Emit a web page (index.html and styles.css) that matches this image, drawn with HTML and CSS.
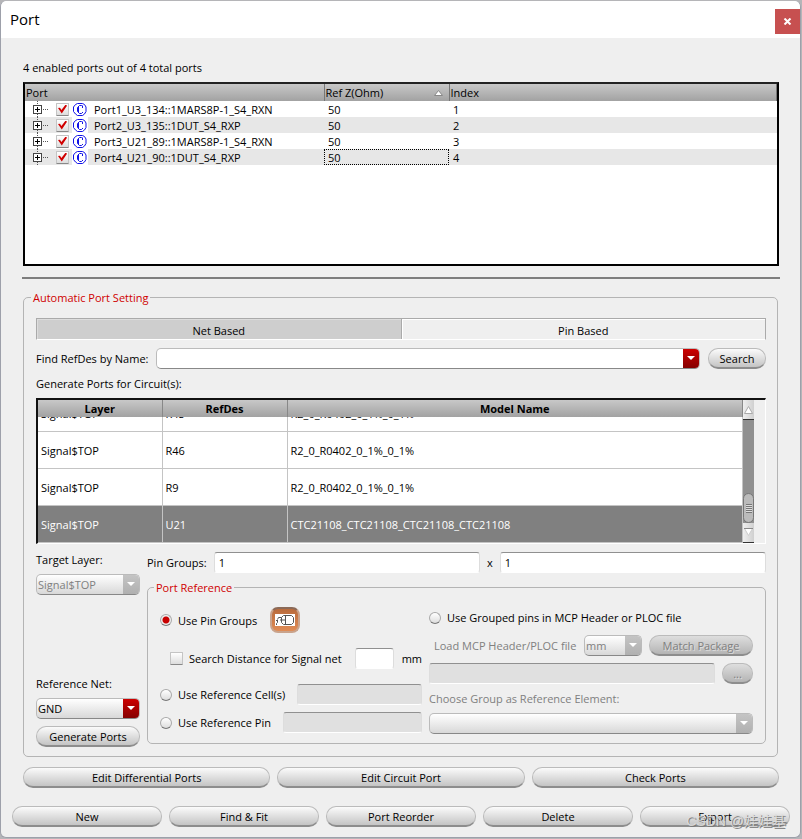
FILE: index.html
```html
<!DOCTYPE html>
<html lang="en">
<head>
<meta charset="utf-8">
<title>Port</title>
<link rel="stylesheet" href="styles.css">
</head>
<body>
<svg class="defs" aria-hidden="true">
  <symbol id="plus" viewBox="0 0 16 16">
    <path d="M5.500 0v3M5.500 13v3M11 8.500h5" fill="none" stroke="#555" stroke-dasharray="1 1"/>
    <rect x="1.500" y="4.500" width="8" height="8" fill="#fff" stroke="#444"/>
    <path d="M3 8.500h5M5.500 6v5" stroke="#000"/>
  </symbol>
  <symbol id="circuit" viewBox="0 0 16 16">
    <rect width="16" height="16" fill="#fff"/>
    <path d="M5.500 2.500h5l2 1 1.500 2.500v4.500l-1.500 2.500-2 1.500h-5l-2-1.500L1.500 10.500V6L3.500 3.500z" fill="none" stroke="#1212e8"/>
    <path d="M10.500 4.500v2.500M10.500 5.500l-1-1h-2l-2 2v4l2 2h2l1.500-1.500" fill="none" stroke="#1212e8"/>
    <path d="M6.500 5v7" fill="none" stroke="#1212e8"/>
  </symbol>
</svg>
<main class="window">
  <header class="titlebar">
    <h1>Port</h1>
    <button class="close" aria-label="Close"><svg width="9" height="7" viewBox="0 0 9 7"><path d="M1.500.500l6 6M7.500.500l-6 6" stroke="#fff" stroke-width="2"/></svg></button>
  </header>

  <div class="content">
    <p class="summary">4 enabled ports out of 4 total ports</p>
    <div class="portlist">
      <table class="ports">
        <colgroup><col class="c-port"><col class="c-ref"><col></colgroup>
        <thead><tr><th>Port</th><th><span class="sort">Ref Z(Ohm)<svg width="9" height="6" viewBox="0 0 9 6"><path d="M.500 5.500L4.500.500l4 5z" fill="#fff" stroke="#888"/></svg></span></th><th>Index</th></tr></thead>
        <tbody>
          <tr><td><label class="tree"><svg class="plus"><use href="#plus"/></svg><input type="checkbox" checked><svg class="circuit"><use href="#circuit"/></svg>Port1_U3_134::1MARS8P-1_S4_RXN</label></td><td>50</td><td>1</td></tr>
          <tr><td><label class="tree"><svg class="plus"><use href="#plus"/></svg><input type="checkbox" checked><svg class="circuit"><use href="#circuit"/></svg>Port2_U3_135::1DUT_S4_RXP</label></td><td>50</td><td>2</td></tr>
          <tr><td><label class="tree"><svg class="plus"><use href="#plus"/></svg><input type="checkbox" checked><svg class="circuit"><use href="#circuit"/></svg>Port3_U21_89::1MARS8P-1_S4_RXN</label></td><td>50</td><td>3</td></tr>
          <tr><td><label class="tree"><svg class="plus"><use href="#plus"/></svg><input type="checkbox" checked><svg class="circuit"><use href="#circuit"/></svg>Port4_U21_90::1DUT_S4_RXP</label></td><td class="focused">50</td><td>4</td></tr>
        </tbody>
      </table>
    </div>
    <hr>

    <fieldset class="auto">
      <legend>Automatic Port Setting</legend>
      <div class="tabs" role="tablist">
        <button role="tab" aria-selected="true">Net Based</button>
        <button role="tab" aria-selected="false">Pin Based</button>
      </div>
      <div class="find">
        <label for="refdes">Find RefDes by Name:</label>
        <span class="combo plain red"><select id="refdes"><option></option></select></span>
        <button class="btn search">Search</button>
      </div>
      <p class="caption">Generate Ports for Circuit(s):</p>
      <div class="circuits">
        <table>
          <colgroup><col class="c-layer"><col class="c-des"><col></colgroup>
          <thead><tr><th>Layer</th><th>RefDes</th><th>Model Name</th></tr></thead>
          <tbody>
            <tr class="cut"><td><div><span>Signal$TOP</span></div></td><td><div><span>R45</span></div></td><td><div><span>R2_0_R0402_0_1%_0_1%</span></div></td></tr>
            <tr><td>Signal$TOP</td><td>R46</td><td>R2_0_R0402_0_1%_0_1%</td></tr>
            <tr><td>Signal$TOP</td><td>R9</td><td>R2_0_R0402_0_1%_0_1%</td></tr>
            <tr class="selected"><td>Signal$TOP</td><td>U21</td><td>CTC21108_CTC21108_CTC21108_CTC21108</td></tr>
          </tbody>
        </table>
        <div class="scrollbar">
          <button aria-label="Scroll up"><svg width="9" height="9" viewBox="0 0 9 9"><path d="M.500 8.500l4-7 4 7z" fill="#fff" stroke="#aaa"/></svg></button>
          <div class="track"><div class="thumb"></div></div>
          <button aria-label="Scroll down"><svg width="9" height="9" viewBox="0 0 9 9"><path d="M.500.500h8l-4 7z" fill="#fff" stroke="#ccc"/><path d="M0 .500h9" stroke="#888"/></svg></button>
        </div>
      </div>

      <div class="lower">
        <div class="side">
          <label for="layer">Target Layer:</label>
          <span class="combo"><select id="layer" disabled><option>Signal$TOP</option></select></span>
          <label for="net" class="netlabel">Reference Net:</label>
          <span class="combo red"><select id="net"><option>GND</option></select></span>
          <button class="btn">Generate Ports</button>
        </div>
        <div class="detail">
          <div class="groups">
            <label for="rows">Pin Groups:</label>
            <input type="text" id="rows" value="1">
            <label for="cols">x</label>
            <input type="text" id="cols" value="1">
          </div>
          <fieldset class="reference">
            <legend>Port Reference</legend>
            <div class="choices">
              <div class="choice first">
                <input type="radio" name="ref" id="r1" checked><label for="r1">Use Pin Groups</label>
                <button class="pinicon" aria-label="Show pin groups"><svg width="20" height="12" viewBox="0 0 20 12"><rect width="20" height="12" fill="#fff"/><path d="M8.500 1.500h8l2 2v5l-2 2h-8l-2-2v-5zM10.500 1.500v9M5 6h5.500M6.500 3.500h-3l-1 2M1 6.500h2M2.500 6.500v2l-1 1v1.500" fill="none" stroke="#555"/></svg></button>
              </div>
              <div class="choice distance">
                <input type="checkbox" id="dist"><label for="dist">Search Distance for Signal net</label>
                <input type="text" class="short" aria-label="Distance"><span>mm</span>
              </div>
              <div class="choice">
                <input type="radio" name="ref" id="r2"><label for="r2">Use Reference Cell(s)</label>
                <input type="text" aria-label="Reference cells" disabled>
              </div>
              <div class="choice">
                <input type="radio" name="ref" id="r3"><label for="r3">Use Reference Pin</label>
                <input type="text" aria-label="Reference pin" disabled>
              </div>
            </div>
            <div class="package">
              <div class="choice">
                <input type="radio" name="ref" id="r4"><label for="r4">Use Grouped pins in MCP Header or PLOC file</label>
              </div>
              <div class="line">
                <label for="unit" class="off load">Load MCP Header/PLOC file</label>
                <span class="combo unit"><select id="unit" disabled><option>mm</option></select></span>
                <button class="btn match" disabled>Match Package</button>
              </div>
              <div class="line">
                <input type="text" aria-label="File" disabled>
                <button class="btn more" disabled>...</button>
              </div>
              <label for="group" class="off">Choose Group as Reference Element:</label>
              <span class="combo"><select id="group" disabled><option></option></select></span>
            </div>
          </fieldset>
        </div>
      </div>
    </fieldset>

    <div class="buttons edit">
      <button class="btn">Edit Differential Ports</button>
      <button class="btn">Edit Circuit Port</button>
      <button class="btn">Check Ports</button>
    </div>
  </div>
  <footer class="buttons">
    <button class="btn">New</button>
    <button class="btn">Find &amp; Fit</button>
    <button class="btn">Port Reorder</button>
    <button class="btn">Delete</button>
    <button class="btn">Export</button>
  </footer>
  <span class="watermark">CSDN @娃娃基</span>
</main>
</body>
</html>
```
FILE: styles.css
```css
* { box-sizing: border-box; }

body {
  margin: 0;
  padding: 1px 1px 0 0;
  background: #b5b5b8;
  font: 11px/15px "Open Sans", "Noto Sans CJK SC", sans-serif;
  color: #000;
}

button, input, select { font: inherit; color: inherit; margin: 0; }
p { margin: 0; }
.defs { display: none; }

.window {
  position: relative;
  border: solid #9da0aa;
  border-width: 0 1px 1px;
  border-radius: 6px;
  background: #efefef;
  overflow: hidden;
}

.titlebar {
  display: flex;
  justify-content: space-between;
  align-items: flex-start;
  height: 37px;
  padding-left: 9px;
  background: #fff;
}
.titlebar h1 { margin: 7px 0 0; font-size: 15px; line-height: 22px; font-weight: 400; }
.close {
  width: 25px;
  height: 25px;
  margin-top: 8px;
  padding: 0;
  border: 0;
  background: #c75050;
}
.close svg { display: block; margin: 0 auto; }

.content { padding: 22px 20px 0 21px; }
.summary { padding-left: 1px; margin-bottom: 7px; }

.portlist {
  height: 184px;
  margin: 0 1px;
  border: 2px solid #000;
  border-top-color: #222;
  background: #fff;
}
table { width: 100%; border-collapse: collapse; table-layout: fixed; }
th, td { padding: 0; text-align: left; font-weight: 400; white-space: nowrap; }
thead tr { background: linear-gradient(#c8c8c8, #a2a2a2); }
.c-port { width: 299px; }
.c-ref { width: 125px; }
.ports th { height: 17px; padding-left: 1px; border-right: 1px solid #777; }
.ports th + th { border-left: 1px solid #ccc; }
.sort { display: flex; justify-content: space-between; align-items: center; padding-right: 6px; }
.ports td { height: 16px; padding-left: 4px; }
.ports td:first-child { padding-left: 7px; }
.ports tbody tr:nth-child(even) { background: #e7e7e7; }
.ports .focused { outline: 1px dotted #000; outline-offset: -1px; }
.tree { display: flex; align-items: center; height: 16px; }
.plus { width: 16px; height: 16px; margin-right: 8px; }
.circuit { width: 16px; height: 16px; margin: 0 6px 0 3px; }

input[type="checkbox"] {
  appearance: none;
  position: relative;
  flex: none;
  width: 13px;
  height: 13px;
  border: 1px solid #c4c4c4;
  border-bottom-color: #888;
  border-radius: 1px;
  background: linear-gradient(#fff, #ddd);
}
input[type="checkbox"]:checked::after {
  content: "";
  position: absolute;
  inset: 1px;
  background: #d00000;
  clip-path: polygon(0 40%, 22% 35%, 38% 60%, 85% 0, 100% 15%, 42% 100%);
}
input[type="radio"] {
  appearance: none;
  flex: none;
  width: 12px;
  height: 12px;
  border: 1px solid #aaa;
  border-bottom-color: #777;
  border-radius: 50%;
  background: linear-gradient(#fff, #ddd);
}
input[type="radio"]:checked { background: radial-gradient(circle, #c80000 0 3px, #eee 4px); }

hr { height: 2px; margin: 11px 0; border: 0; background: #7d7d7d; }

fieldset {
  min-width: 0;
  margin: 0;
  border: 1px solid #b4b4b4;
  border-radius: 5px;
}
legend { margin: 0; padding: 0 2px; line-height: 15px; color: #d00000; }
.auto { margin: 0 2px 0 1px; padding: 13px 11px 9px 12px; }
.auto > legend { margin-left: -5px; }

.tabs { display: flex; height: 22px; border: 1px solid #aaa; border-bottom-color: #fff; }
.tabs button { flex: 1; border: 0; padding: 3px 0 0; background: #efefef; box-shadow: inset 1px 1px #fff; }
.tabs [aria-selected="true"] { background: #cecece; border-right: 1px solid #aaa; box-shadow: inset 1px 1px #ddd; }

.find { display: flex; align-items: center; gap: 8px; margin-top: 8px; }
.find .combo { flex: 1; }

.combo { position: relative; display: block; height: 21px; }
.combo select {
  appearance: none;
  display: block;
  width: 100%;
  height: 21px;
  padding: 0 16px 0 1px;
  border: 1px solid #bbb;
  border-bottom-color: #888;
  border-radius: 5px;
  background: linear-gradient(#fff, #d8d8d8);
}
.combo.plain select { background: #fff; }
.combo select:disabled { color: #808080; opacity: 1; }
.combo::before {
  content: "";
  position: absolute;
  inset: 1px 1px 1px auto;
  width: 16px;
  border-radius: 0 4px 4px 0;
  background: linear-gradient(#c4c4c4, #b0b0b0);
  pointer-events: none;
}
.combo.red::before { background: linear-gradient(#cc0000, #850000); }
.combo::after {
  content: "";
  position: absolute;
  top: 8px;
  right: 5px;
  border: 4px solid transparent;
  border-top-color: #fff;
  border-bottom-width: 0;
  pointer-events: none;
}

.btn {
  height: 21px;
  padding: 0 8px;
  border: 1px solid #bbb;
  border-bottom: 2px solid #8d8d8d;
  border-radius: 10px;
  background: linear-gradient(#fbfbfb, #c4c4c4);
  line-height: 15px;
  white-space: nowrap;
}
.btn:disabled { color: #808080; background: linear-gradient(#dedede, #b4b4b4); text-shadow: 1px 1px #ddd; }
.search { width: 58px; }

.caption { margin: 7px 0; }

.circuits {
  display: flex;
  align-items: flex-start;
  height: 146px;
  border: solid #fff;
  border-width: 2px 1px 1px 2px;
  border-top-color: #111;
  border-left-color: #111;
  overflow: hidden;
}
.circuits table { flex: 1; min-width: 0; }
.c-layer { width: 124px; }
.c-des { width: 125px; }
.circuits th { height: 17px; text-align: center; font-weight: 700; border-right: 1px solid #888; }
.circuits td {
  height: 37px;
  padding: 0 3px;
  border: 1px solid #c4c4c4;
  border-width: 0 1px 1px 0;
  background: #fff;
}
.circuits .cut td { height: 14px; }
.cut div { display: flex; align-items: flex-end; height: 14px; overflow: hidden; }
.cut span { flex: none; line-height: 34px; }
.circuits .selected td { background: #808080; color: #fff; }

.scrollbar { display: flex; flex-direction: column; width: 11px; height: 143px; margin-right: 11px; }
.scrollbar button {
  display: block;
  height: 20px;
  padding: 0;
  border: 0;
  border-bottom: 1px solid #333;
  background: linear-gradient(90deg, #eee, #d0d0d0);
}
.scrollbar svg { display: block; margin: 0 auto; }
.track { display: flex; flex: 1; align-items: flex-end; background: #909090; }
.thumb {
  width: 11px;
  height: 30px;
  border: 1px solid #777;
  border-radius: 6px;
  background: repeating-linear-gradient(#777 0 1px, #ddd 1px 2px) center / 6px 9px no-repeat, #bbb;
}

.lower { display: grid; grid-template-columns: 104px 1fr; gap: 7px; margin-top: 8px; }
.side { display: flex; flex-direction: column; }
.side .combo { margin-top: 7px; }
.side .netlabel { margin-top: 81px; }
.side .btn { margin-top: 7px; }

input[type="text"] {
  min-width: 0;
  height: 21px;
  padding: 0 4px;
  border: 1px solid #ddd;
  border-top: 1px solid #909090;
  border-bottom-color: #fff;
  border-radius: 3px;
  background: #fff;
}
input[type="text"]:disabled { background: #e0e0e0; }
.groups { display: flex; align-items: center; gap: 7px; }
.groups input { flex: 1; }

.reference {
  display: grid;
  grid-template-columns: 262px 1fr;
  gap: 7px;
  margin-top: 7px;
  padding: 12px 12px 9px;
}
.reference > legend { margin-left: -6px; }
.choice { display: flex; align-items: center; gap: 6px; height: 21px; margin-bottom: 7px; }
.choice input[type="text"] { flex: 1; margin-left: 6px; }
.choices .first { height: 26px; margin-bottom: 15px; }
.choices .distance { padding-left: 10px; margin-bottom: 15px; }
.choice:last-child { margin-bottom: 0; }
.choice input.short { flex: none; width: 39px; }
.distance label { flex: 1; white-space: nowrap; }
.distance span { padding-left: 2px; }
.pinicon {
  width: 30px;
  height: 26px;
  margin-left: 7px;
  padding: 0;
  border: 2px solid #c9a38c;
  border-top-color: #8b6a58;
  border-radius: 8px;
  background: linear-gradient(#b96b3c, #e08c56);
}
.pinicon svg { display: block; margin: 0 auto; }
.package { display: flex; flex-direction: column; }
.line { display: flex; align-items: center; gap: 7px; margin-bottom: 7px; }
.line input { flex: 1; }
.line .load { flex: 1; padding-left: 5px; }
.off { color: #808080; }
.unit { width: 58px; }
.match { width: 104px; }
.more { width: 31px; }
.package > .combo { margin-top: 7px; }

.buttons { display: flex; gap: 7px; padding: 0 10px 0 11px; margin: 18px 0 10px; }
.buttons .btn { flex: 1 1 0; }
.edit { padding: 0 1px; margin: 10px 0 0; }

.watermark {
  position: absolute;
  right: 14px;
  bottom: 5px;
  color: #ddd;
  font: 14px/21px "Liberation Sans", "Noto Sans CJK SC", sans-serif;
  text-shadow: 1px 1px #777;
  opacity: 0.85;
}
```
